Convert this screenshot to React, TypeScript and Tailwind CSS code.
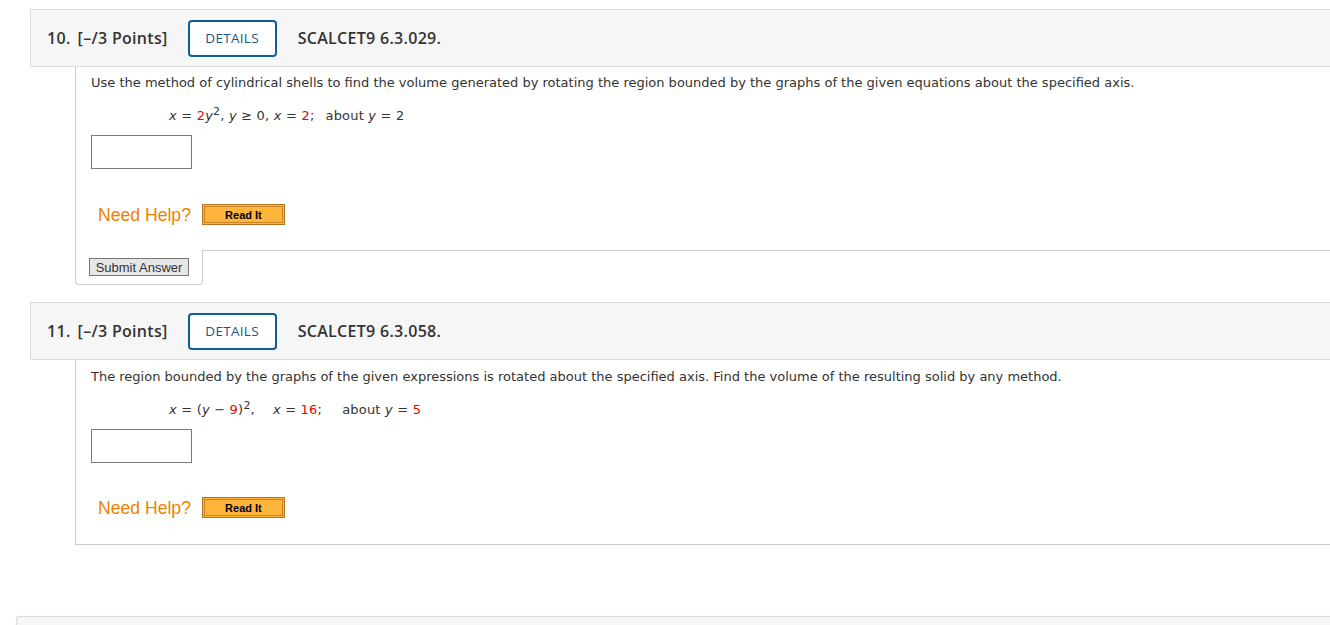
import * as React from "react";

const verdana = "font-['DejaVu_Sans',Verdana,sans-serif]";
const arial = "font-['Liberation_Sans',Arial,sans-serif]";

function Header({ num, code }: { num: string; code: string }) {
  return (
    <div className="ml-[30px] flex h-[58px] items-center border border-r-0 border-[#dddddd] bg-[#f6f6f6] pl-[16px] font-['Open_Sans',sans-serif] text-[16px] font-semibold tracking-[0.3px] text-[#333333]">
      <span>{num}</span>
      <span className="ml-[7px]">[–/3 Points]</span>
      <button
        type="button"
        className="ml-[20px] flex h-[37px] w-[89px] items-center justify-center rounded-[4px] border-2 border-[#0d5f96] bg-white text-[13.5px] font-medium tracking-[0.3px] text-[#1d5483]"
      >
        DETAILS
      </button>
      <span className="ml-[21px]">{code}</span>
    </div>
  );
}

function Red({ children }: { children: React.ReactNode }) {
  return <span className="text-[#ee0000]">{children}</span>;
}

function HelpRow() {
  return (
    <div className="ml-[7px] flex items-center">
      <span className={`${arial} text-[17.6px] text-[#ee8200]`}>Need Help?</span>
      <div className="ml-[11px] h-[21px] w-[83px] border border-[#b7741f] bg-[#ffb43c] p-[1px]">
        <div className={`flex h-full w-full items-center justify-center border border-[#c98523] ${arial} text-[11px] font-bold text-black`}>
          Read It
        </div>
      </div>
    </div>
  );
}

function AnswerBox() {
  return <div className="h-[34px] w-[101px] border border-[#7a7a7a] bg-white" />;
}

export default function App() {
  return (
    <div className="h-[625px] w-[1330px] overflow-hidden bg-white">
      <div className="w-[1500px] pt-[9px]">
        <Header num="10." code="SCALCET9 6.3.029." />
        <div className="ml-[75px]">
          <div className={`border-l border-[#cccccc] pl-[15px] pt-[8px] ${verdana} text-[13px] leading-[16px] text-[#333333]`}>
            <p>
              Use the method of cylindrical shells to find the volume generated by rotating the region bounded by the
              graphs of the given equations about the specified axis.
            </p>
            <p className="mt-[17px] pl-[78px] tracking-[0.2px]">
              <i>x</i> = <Red>2</Red>
              <i>y</i>
              <sup className="text-[11px]">2</sup>, <i>y</i> ≥ 0, <i>x</i> = <Red>2</Red>;
              <span className="ml-[11px]">about</span> <i>y</i> = 2
            </p>
            <div className="mt-[11px]">
              <AnswerBox />
            </div>
            <div className="mt-[35px]">
              <HelpRow />
            </div>
            <div className="h-[25px]" />
          </div>
          <div className="flex">
            <div className="flex h-[35px] w-[128px] items-start rounded-b-[4px] border border-t-0 border-[#cccccc] pl-[13px] pt-[8px]">
              <button
                type="button"
                className={`h-[18px] w-[100px] border border-[#777777] bg-[#e6e6e6] ${arial} text-[13px] leading-[15px] text-[#333333]`}
              >
                Submit Answer
              </button>
            </div>
            <div className="flex-1 border-t border-[#cccccc]" />
          </div>
        </div>

        <div className="mt-[17px]">
          <Header num="11." code="SCALCET9 6.3.058." />
        </div>
        <div className="ml-[75px]">
          <div className={`border-b border-l border-[#cccccc] pb-[26px] pl-[15px] pt-[9px] ${verdana} text-[13px] leading-[16px] text-[#333333]`}>
            <p>
              The region bounded by the graphs of the given expressions is rotated about the specified axis. Find the
              volume of the resulting solid by any method.
            </p>
            <p className="mt-[17px] pl-[78px] tracking-[0.2px]">
              <i>x</i> = (<i>y</i> − <Red>9</Red>)<sup className="text-[11px]">2</sup>,
              <span className="ml-[18px]"><i>x</i> = <Red>16</Red>;</span>
              <span className="ml-[20px]">about <i>y</i> = <Red>5</Red></span>
            </p>
            <div className="mt-[11px]">
              <AnswerBox />
            </div>
            <div className="mt-[34px]">
              <HelpRow />
            </div>
          </div>
        </div>

        <div className="ml-[16px] mt-[71px] h-[40px] rounded-tl-[3px] border border-r-0 border-b-0 border-[#dddddd] bg-[#f6f6f6] shadow-[0_0_2px_rgba(0,0,0,0.08)]" />
      </div>
    </div>
  );
}
